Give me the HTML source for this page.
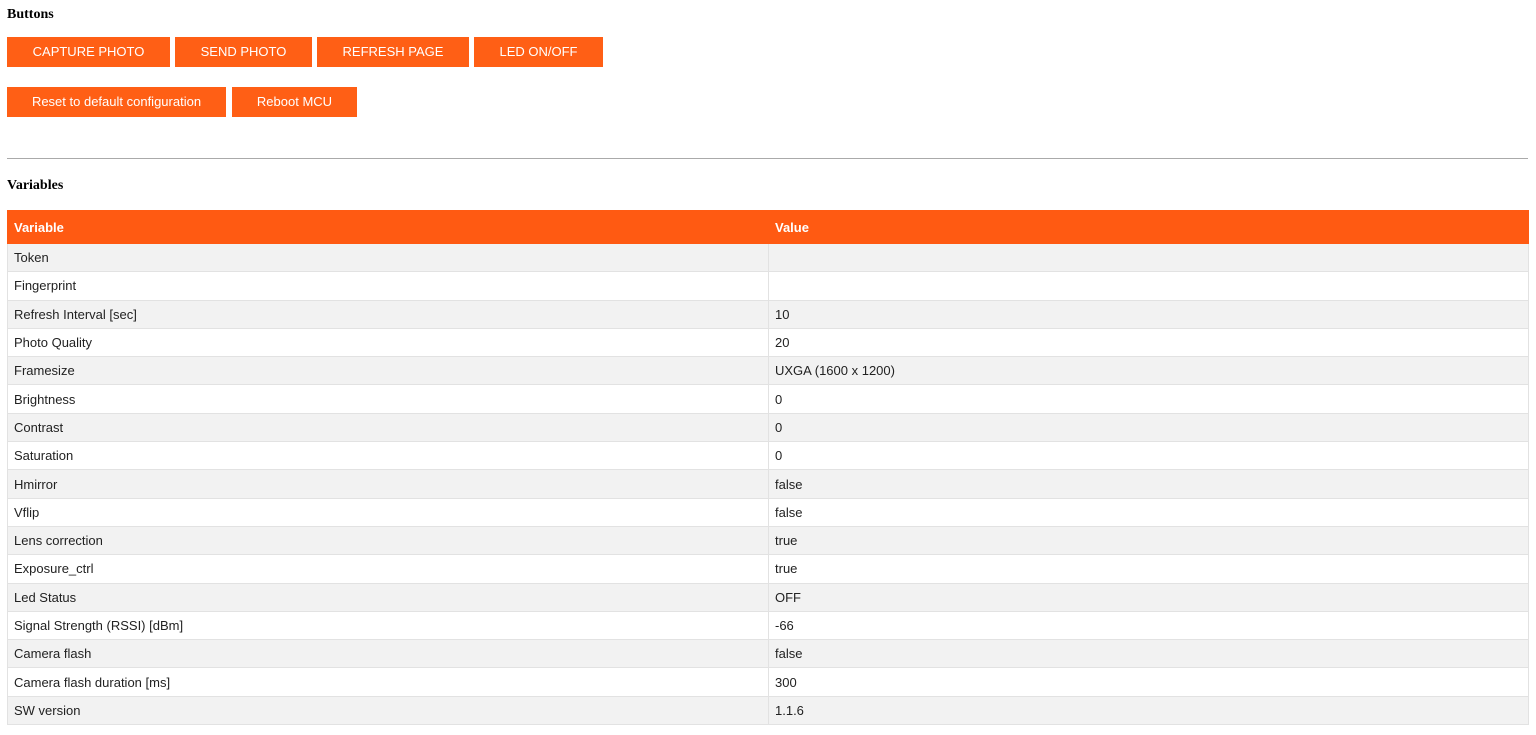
<!DOCTYPE html>
<html><head><style>
body{margin:0;background:#fff;font-family:"Liberation Sans",Arial,sans-serif;}
h4{font-family:"Liberation Serif",serif;font-size:14px;font-weight:bold;margin:0;position:absolute;left:7px;}
.btn{position:absolute;height:30px;background:#ff5f15;color:#fff;font-size:13px;line-height:30px;text-align:center;}
hr{position:absolute;left:7px;width:1521px;top:158px;margin:0;border:0;border-top:1px solid #aaa;}
table{position:absolute;left:7px;top:210px;width:1522px;border-collapse:collapse;font-size:13px;color:#222;}
th{background:#ff5a12;color:#fff;text-align:left;height:32px;padding:0 6px;font-weight:bold;border:1px solid #ff5a12;}
td{height:27.3px;padding:0 6px;border:1px solid #e2e2e2;}
tr:nth-child(even) td{background:#f2f2f2;}
th:first-child{width:748px;}
</style></head><body>
<h4 style="top:7px">Buttons</h4>
<div class="btn" style="left:7px;top:37px;width:163px">CAPTURE PHOTO</div>
<div class="btn" style="left:175px;top:37px;width:137px">SEND PHOTO</div>
<div class="btn" style="left:317px;top:37px;width:152px">REFRESH PAGE</div>
<div class="btn" style="left:474px;top:37px;width:129px">LED ON/OFF</div>
<div class="btn" style="left:7px;top:87px;width:219px">Reset to default configuration</div>
<div class="btn" style="left:232px;top:87px;width:125px">Reboot MCU</div>
<hr>
<h4 style="top:178px">Variables</h4>
<table>
<tr><th>Variable</th><th>Value</th></tr>
<tr><td>Token</td><td></td></tr>
<tr><td>Fingerprint</td><td></td></tr>
<tr><td>Refresh Interval [sec]</td><td>10</td></tr>
<tr><td>Photo Quality</td><td>20</td></tr>
<tr><td>Framesize</td><td>UXGA (1600 x 1200)</td></tr>
<tr><td>Brightness</td><td>0</td></tr>
<tr><td>Contrast</td><td>0</td></tr>
<tr><td>Saturation</td><td>0</td></tr>
<tr><td>Hmirror</td><td>false</td></tr>
<tr><td>Vflip</td><td>false</td></tr>
<tr><td>Lens correction</td><td>true</td></tr>
<tr><td>Exposure_ctrl</td><td>true</td></tr>
<tr><td>Led Status</td><td>OFF</td></tr>
<tr><td>Signal Strength (RSSI) [dBm]</td><td>-66</td></tr>
<tr><td>Camera flash</td><td>false</td></tr>
<tr><td>Camera flash duration [ms]</td><td>300</td></tr>
<tr><td>SW version</td><td>1.1.6</td></tr>
</table>
</body></html>
